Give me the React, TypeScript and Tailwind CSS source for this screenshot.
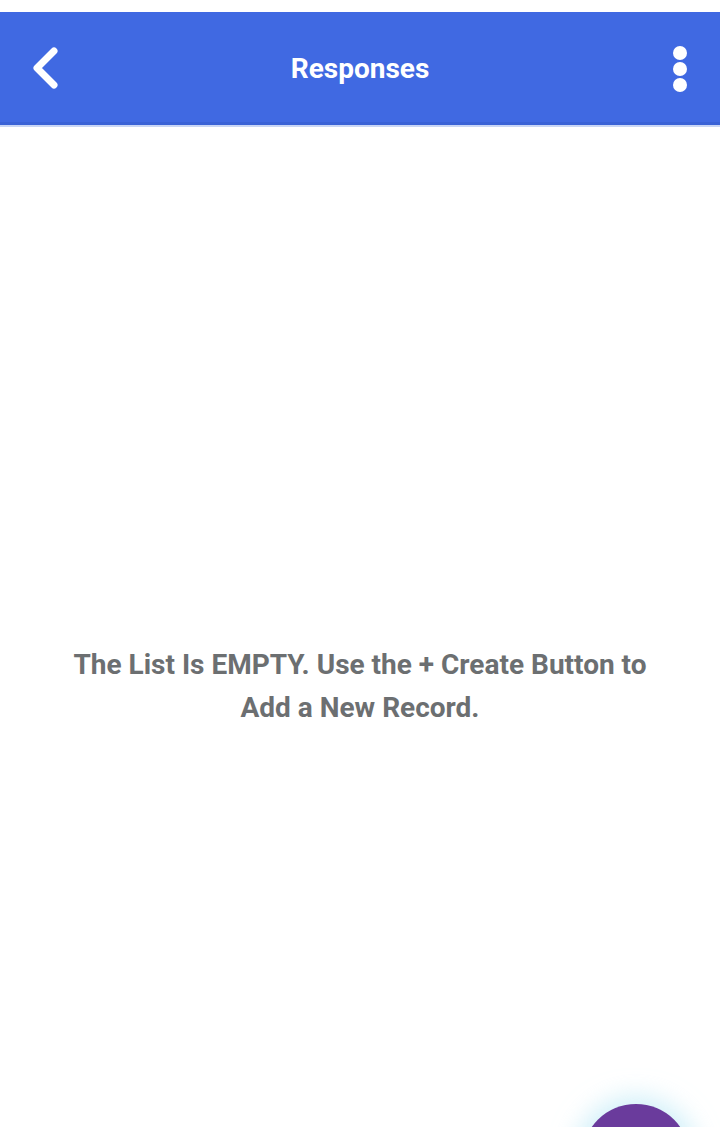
export default function App() {
  return (
    <div className="relative h-[1127px] w-full overflow-hidden bg-white font-['Roboto',sans-serif]">
      <div className="h-[12px]" />

      {/* App bar */}
      <header className="flex h-[113px] items-center justify-between border-b-[3px] border-[#3a62d6] bg-[#4069e2] px-[30px] shadow-[0_2px_0_#c9d6f5]">
        <button className="flex h-[44px] w-[32px] items-center justify-start pt-[2px]">
          <svg width="30" height="44" viewBox="0 0 30 44" fill="none">
            <path d="M24 5 L7 22 L24 39" stroke="white" strokeWidth="7" strokeLinecap="round" strokeLinejoin="round" />
          </svg>
        </button>
        <h1 className="pt-[4px] text-[28px] font-bold text-white">Responses</h1>
        <button className="flex w-[32px] flex-col items-end gap-[2px] pr-[3px] pt-[4px]">
          <span className="h-[14px] w-[14px] rounded-full bg-white" />
          <span className="h-[14px] w-[14px] rounded-full bg-white" />
          <span className="h-[14px] w-[14px] rounded-full bg-white" />
        </button>
      </header>

      {/* Empty state */}
      <main className="px-[60px] pt-[518px] text-center">
        <p className="text-[28px] font-bold leading-[43px] text-[#6c6f71]">
          The List Is EMPTY. Use the + Create Button to Add a New Record.
        </p>
      </main>

      {/* Floating create button */}
      <button className="absolute left-[582px] top-[1104px] h-[108px] w-[108px] rounded-full bg-[#6a3b9c] shadow-[0_0_24px_8px_rgba(180,230,245,0.6)]" />
    </div>
  );
}
